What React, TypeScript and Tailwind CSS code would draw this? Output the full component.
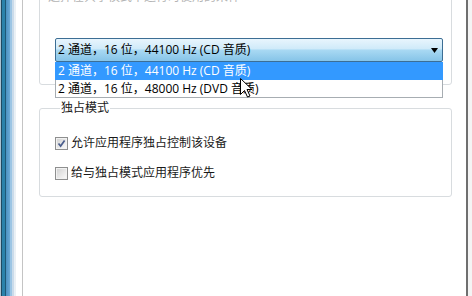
function Check({ checked, label }: { checked?: boolean; label: string }) {
  return (
    <label className="flex h-[16px] items-center gap-[3px] leading-[16px]">
      <span className="flex h-[13px] w-[13px] shrink-0 items-center justify-center border border-[#8e8f8f] bg-white">
        <span className="flex h-[11px] w-[11px] items-center justify-center border border-[#f2f2f2] bg-[linear-gradient(135deg,#d4d4d4,#f8f8f8)]">
          {checked && (
            <svg width="9" height="9" viewBox="0 0 9 9">
              <path d="M1.5 4.5 L3.6 7 L7.6 1.5" fill="none" stroke="#4a5d8c" strokeWidth="1.7" />
            </svg>
          )}
        </span>
      </span>
      <span className="text-[#1a1a1a]">{label}</span>
    </label>
  );
}

export default function App() {
  return (
    <div className="relative flex h-[296px] w-[472px] overflow-hidden bg-white font-['Open_Sans','Noto_Sans_CJK_SC',sans-serif] text-[12px] text-black">
      {/* window frame */}
      <div className="w-[16px] shrink-0 bg-[linear-gradient(to_right,#a9c2d2_0px,#a9c2d2_1px,#1f4a62_1px,#1f4a62_2px,#2a82aa_2px,#2a82aa_5px,#1d5876_5px,#1d5876_6px,#4b92c2_6px,#6aa9d6_10px,#9cc5e4_10px,#9cc5e4_12px,#cadbea_12px,#cadbea_14px,#eaf0f5_14px)]" />
      <div className="w-[6px] shrink-0" />
      <div className="w-px shrink-0 bg-[#c4c4c4]" />

      <main className="flex flex-1 flex-col pl-[16px] pr-[14px]">
        {/* 默认格式 */}
        <section className="-mt-[20px] h-[105px] shrink-0 rounded-[3px] border border-[#d8dcdf]">
          <p className="whitespace-nowrap pl-[8px] pt-[8px] leading-[16px] text-[#b4b4b4]">
            选择在共享模式中运行时使用的采样
          </p>
          <div className="relative ml-[15px] mr-[8px] mt-[33px]">
            <div className="flex h-[24px] items-center justify-between rounded-[2px] border border-[#3c6e94] bg-[linear-gradient(to_bottom,#e8f5fd,#cfeaf9_45%,#a9d9f3_50%,#86c4e8)] pl-[2px] pr-[4px] leading-[22px]">
              <span>2 通道，16 位，44100 Hz (CD 音质)</span>
              <svg width="7" height="5" viewBox="0 0 7 5">
                <path d="M0 0 H7 L3.5 5 Z" fill="#000" />
              </svg>
            </div>
            <ul className="absolute left-0 right-0 top-full z-10 border border-t-0 border-[#a7adb2] bg-white">
              <li className="-mx-px h-[18px] bg-[#3399ff] px-[3px] leading-[18px] text-white">
                2 通道，16 位，44100 Hz (CD 音质)
              </li>
              <li className="h-[17px] px-[2px] leading-[17px]">2 通道，16 位，48000 Hz (DVD 音质)</li>
            </ul>
          </div>
        </section>

        {/* 独占模式 */}
        <fieldset className="mt-[16px] rounded-[3px] border border-[#d8dcdf] pb-[15px] pl-[15px]">
          <legend className="ml-[5px] px-[1px] leading-[14px] text-[#1a1a1a]">独占模式</legend>
          <div className="mt-[20px]">
            <Check checked label="允许应用程序独占控制该设备" />
          </div>
          <div className="mt-[14px]">
            <Check label="给与独占模式应用程序优先" />
          </div>
        </fieldset>
      </main>

      <div className="w-[2px] shrink-0 bg-[#6f6f6f]" />
      <div className="w-[4px] shrink-0 bg-[#f4f4f4]" />

      {/* mouse pointer */}
      <svg className="absolute left-[240px] top-[78px] z-20" width="13" height="20" viewBox="0 0 13 20">
        <path d="M0.5 0.5 V16.5 L4.5 12.5 L7.5 19 L10 18 L7 11.5 H12 Z" fill="#fff" stroke="#000" strokeWidth="1" />
      </svg>
    </div>
  );
}
